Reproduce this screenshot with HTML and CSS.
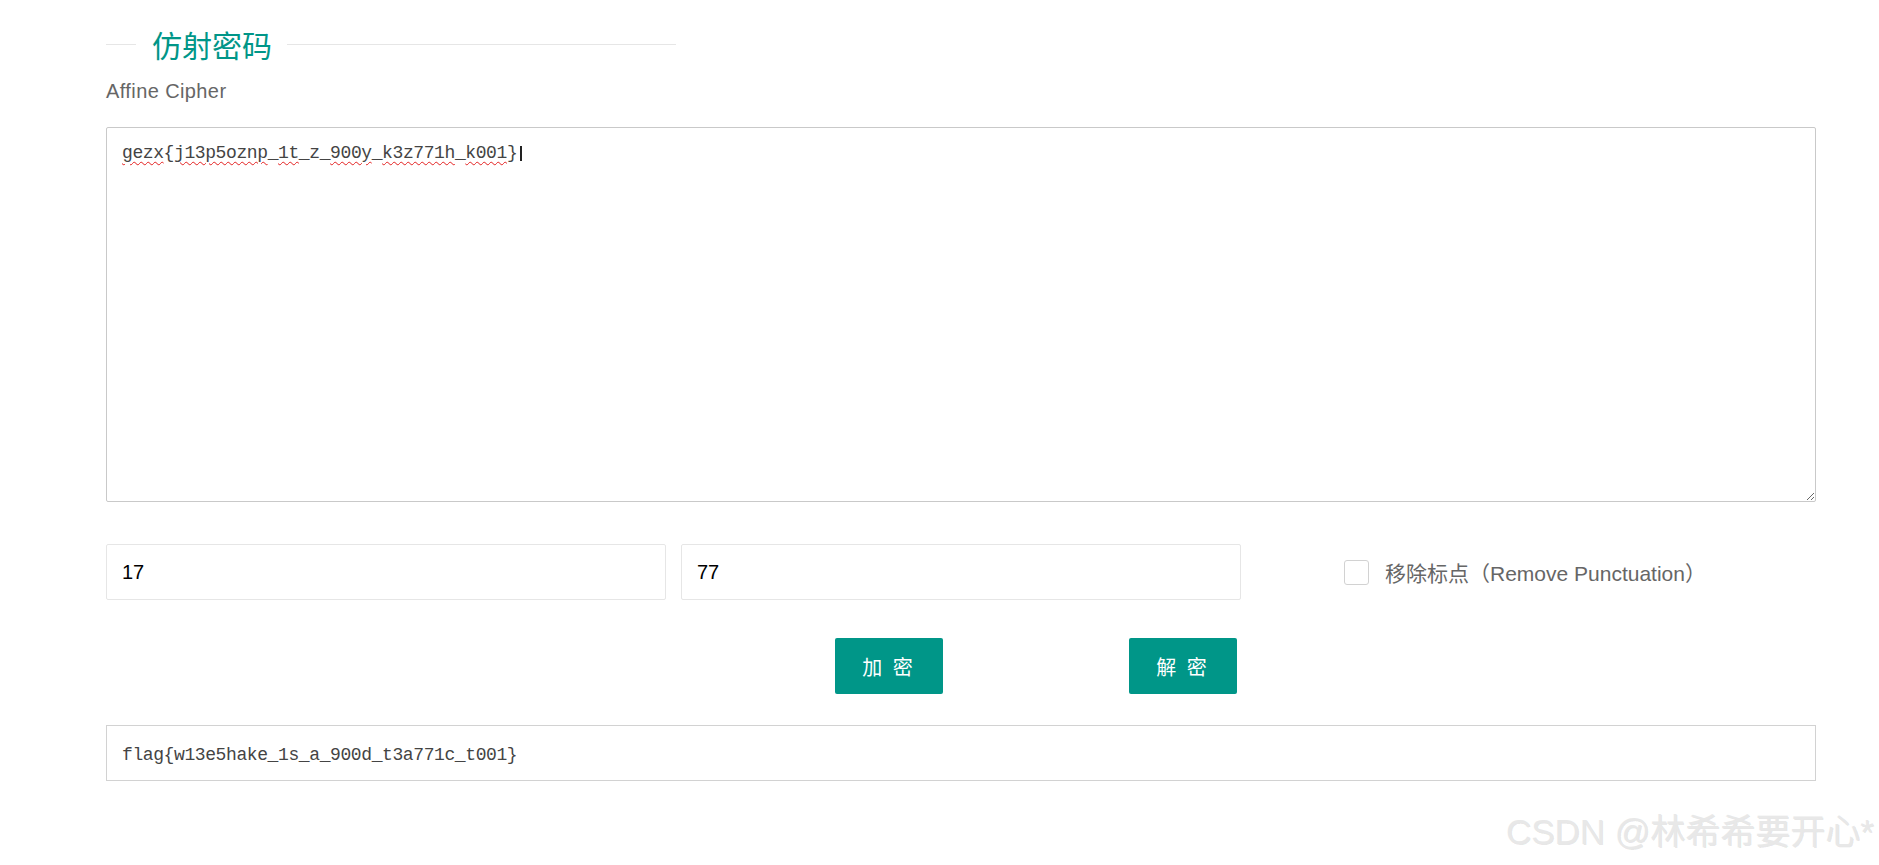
FILE: index.html
```html
<!DOCTYPE html>
<html>
<head>
    <meta charset="utf-8">
    <title>仿射密码 Affine Cipher</title>
    <link rel="stylesheet" href="styles.css">
</head>
<body>
    <div class="page">
        <div class="field-title">
            <span class="line short"></span>
            <h2>仿射密码</h2>
            <span class="line"></span>
        </div>
        <p class="subtitle">Affine Cipher</p>

        <div class="textarea" id="source"><span class="typo">gezx</span>{<span class="typo">j13p5oznp</span>_<span class="typo">1t</span>_z_<span class="typo">900y</span>_<span class="typo">k3z771h</span>_<span class="typo">k001</span>}<span class="caret"></span></div>

        <div class="key-row">
            <div class="col"><input class="key-input" type="text" value="17"></div>
            <div class="col"><input class="key-input" type="text" value="77"></div>
            <div class="col check-col">
                <span class="checkbox"></span>
                <span class="check-label">移除标点（Remove Punctuation）</span>
            </div>
        </div>

        <div class="button-row">
            <button class="btn">加 密</button>
            <button class="btn">解 密</button>
        </div>

        <div class="result">flag{w13e5hake_1s_a_900d_t3a771c_t001}</div>
    </div>

    <div class="watermark">CSDN @林希希要开心*</div>
</body>
</html>
```

FILE: styles.css
```css
body {
    margin: 0;
    padding: 0;
    background-color: #fff;
    font-family: "Liberation Sans", Arial, "Noto Sans CJK SC", sans-serif;
    color: #333;
    position: relative;
    min-height: 865px;
}

.page {
    width: 1710px;
    padding-left: 106px;
}

/* title with the thin line on both sides */
.field-title {
    width: 570px;
    height: 30px;
    padding-top: 29px;
    display: flex;
    align-items: center;
}

.field-title .line {
    flex: 1;
    height: 1px;
    background-color: #e6e6e6;
}

.field-title .line.short {
    flex: 0 0 30px;
}

.field-title h2 {
    margin: 0;
    padding: 0 15px 0 16px;
    font-family: "Noto Sans CJK SC", sans-serif;
    font-size: 30px;
    font-weight: 400;
    line-height: 30px;
    color: #009688;
}

.subtitle {
    margin: 21px 0 0 0;
    font-size: 20px;
    line-height: 22px;
    letter-spacing: 0.4px;
    color: #666;
}

.textarea {
    box-sizing: border-box;
    margin-top: 25px;
    height: 375px;
    padding: 14px 15px;
    border: 1px solid #c9c9c9;
    border-radius: 2px;
    font-family: "Liberation Mono", "Courier New", monospace;
    font-size: 18px;
    letter-spacing: -0.4px;
    line-height: 22px;
    color: #444;
    overflow: auto;
    resize: vertical;
    white-space: pre-wrap;
}

.typo {
    text-decoration: underline wavy #e32020;
    text-decoration-thickness: 1px;
    text-underline-offset: 3px;
}

.caret {
    display: inline-block;
    width: 2px;
    height: 15px;
    margin-left: 3px;
    vertical-align: -3px;
    background-color: #222;
}

.key-row {
    margin-top: 42px;
    display: grid;
    grid-template-columns: repeat(3, 1fr);
    column-gap: 15px;
}

.key-input {
    box-sizing: border-box;
    width: 100%;
    height: 56px;
    padding: 0 15px;
    border: 1px solid #e6e6e6;
    border-radius: 2px;
    font-family: "Liberation Sans", Arial, sans-serif;
    font-size: 20px;
    color: #000;
    outline: none;
}

.check-col {
    display: flex;
    align-items: center;
    padding-left: 88px;
}

.checkbox {
    box-sizing: border-box;
    width: 25px;
    height: 25px;
    border: 1px solid #d2d2d2;
    border-radius: 3px;
    background-color: #fff;
}

.check-label {
    margin-left: 16px;
    font-size: 21px;
    color: #666;
}

.button-row {
    margin-top: 38px;
    padding-left: 729px;
    display: flex;
    gap: 186px;
}

.btn {
    width: 108px;
    height: 56px;
    border: none;
    border-radius: 2px;
    background-color: #009688;
    color: #fff;
    font-family: "Noto Sans CJK SC", sans-serif;
    font-size: 20px;
    letter-spacing: 3px;
    cursor: pointer;
}

.result {
    box-sizing: border-box;
    margin-top: 31px;
    height: 56px;
    padding: 5px 15px 0 15px;
    border: 1px solid #d2d2d2;
    font-family: "Liberation Mono", "Courier New", monospace;
    font-size: 18px;
    letter-spacing: -0.4px;
    line-height: 48px;
    color: #444;
}

/* site watermark over the bottom right corner */
.watermark {
    position: absolute;
    right: 5px;
    top: 812px;
    font-size: 35px;
    line-height: 40px;
    color: #e8e8e8;
    text-shadow: 1px 1px 0 rgba(0, 0, 0, 0.1);
}
```
